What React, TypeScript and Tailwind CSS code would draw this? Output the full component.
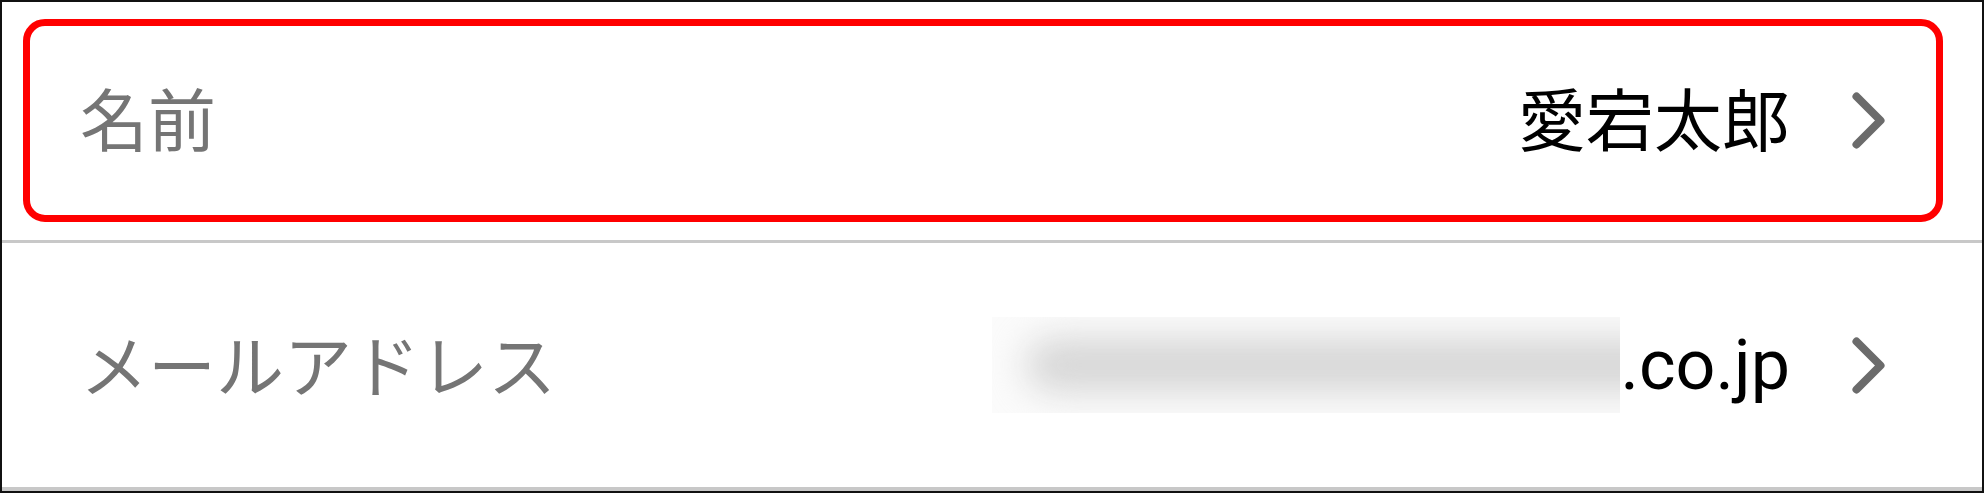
import React from 'react'

const Chevron: React.FC<{ className?: string }> = ({ className = '' }) => (
  <svg
    width="33"
    height="57"
    viewBox="0 0 33 57"
    fill="none"
    className={`shrink-0 ${className}`}
  >
    <polyline
      points="4.5,4.5 28.5,28.5 4.5,52.5"
      stroke="#6b6b6b"
      strokeWidth="8"
      strokeLinecap="round"
      strokeLinejoin="round"
    />
  </svg>
)

// blurred-out part of the address
const Redacted: React.FC = () => (
  <span className="inline-flex w-[628px] h-[96px] overflow-hidden bg-[#fbfbfb] shrink-0">
    <span className="block w-[680px] h-[52px] mt-[22px] ml-[34px] rounded-full bg-[#d5d5d5] blur-[18px] shrink-0" />
  </span>
)

export default function App() {
  return (
    <div className="w-[1984px] h-[493px] border-2 border-[#111111] bg-white [font-family:Roboto,'Noto_Sans_CJK_JP',sans-serif]">
      {/* name row (highlighted) */}
      <div className="h-[238px] pt-[17px] pl-[21px] pr-[39px]">
        <div className="h-[203px] border-[7px] border-[#ff0000] rounded-[22px] flex items-center pl-[50px] pr-[51px]">
          <span className="mt-[4px] text-[68px] leading-none text-[#757575]">名前</span>
          <span className="mt-[4px] ml-auto text-[68px] leading-none text-black">愛宕太郎</span>
          <Chevron className="ml-[62px]" />
        </div>
      </div>
      <div className="h-[3px] bg-[#c8c8c8]" />

      {/* mail row */}
      <div className="h-[244px] flex items-center pl-[78px] pr-[97px]">
        <span className="mt-[8px] text-[68px] leading-none text-[#757575]">メールアドレス</span>
        <div className="ml-auto flex items-center">
          <Redacted />
          <span className="text-[70px] leading-none text-black">.co.jp</span>
        </div>
        <Chevron className="ml-[62px]" />
      </div>
      <div className="h-[4px] bg-[#c8c8c8]" />
    </div>
  )
}
